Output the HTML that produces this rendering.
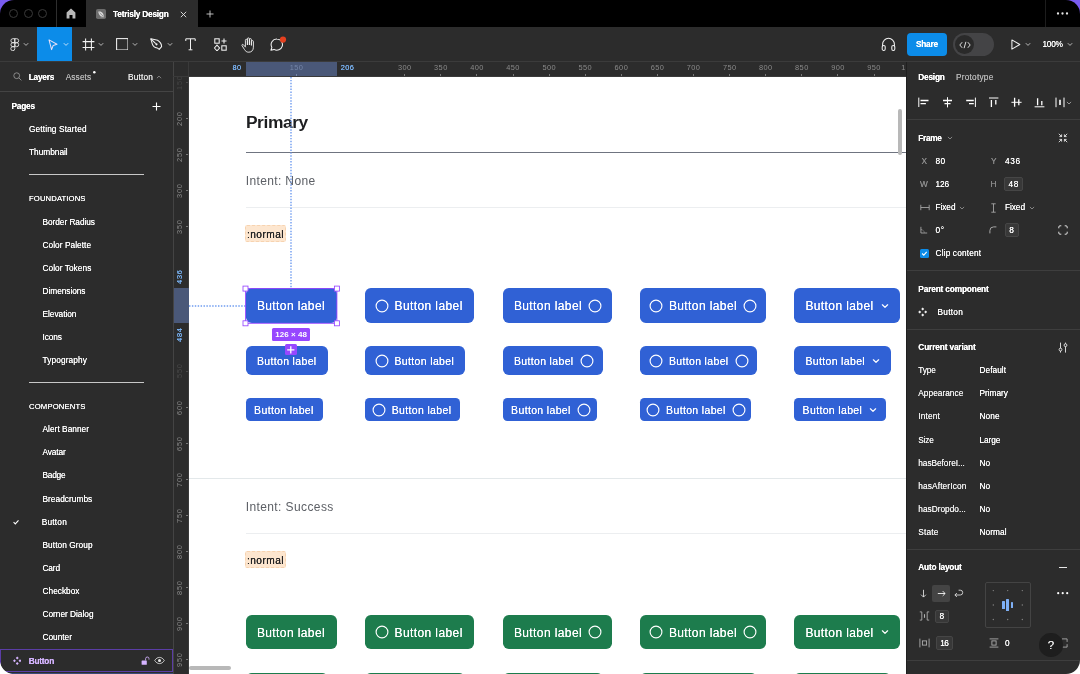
<!DOCTYPE html>
<html lang="en"><head><meta charset="utf-8"><title>Tetrisly Design – Figma</title>
<style>
html,body{margin:0;padding:0;}
body{width:1080px;height:674px;overflow:hidden;background:#fff;font-family:"Liberation Sans",sans-serif;position:relative;}
#app{position:absolute;left:0;top:0;width:1080px;height:674px;overflow:hidden;will-change:transform;}
.a{position:absolute;display:block;box-sizing:border-box;}
.t{position:absolute;display:block;white-space:nowrap;font-family:"Liberation Sans",sans-serif;}
.u{text-shadow:0 0 0.45px currentColor;}
</style></head><body><div id="app">
<div class="a" style="left:0px;top:0px;width:1080px;height:30px;background:#7a5cf0;"></div>
<div class="a" style="left:0px;top:0px;width:1080px;height:27.4px;background:#000;border-radius:14px 14px 0 0;"></div>
<div class="a" style="left:86px;top:0px;width:112px;height:27.4px;background:#2c2c2c;"></div>
<div class="a" style="left:56px;top:0px;width:1px;height:27px;background:#2e2e2e;"></div>
<div class="a" style="left:1045px;top:0px;width:1px;height:27px;background:#1d1d1d;"></div>
<div class="a" style="left:0px;top:27.4px;width:1080px;height:34px;background:#2c2c2c;"></div>
<div class="a" style="left:0px;top:61px;width:1080px;height:1px;background:#3b3b3b;"></div>
<div class="a" style="left:37.3px;top:27.4px;width:34.7px;height:33.8px;background:#0c8ce9;"></div>
<div class="a" style="left:174px;top:62px;width:733px;height:612px;background:#fff;"></div>
<span id="t1" class="t " style="top:109px;font-size:17.4px;line-height:26px;color:#1e1f21;font-weight:700;letter-spacing:-0.397px;left:245.9px;">Primary</span>
<div class="a" style="left:245.5px;top:152px;width:661px;height:0.8px;background:#6f7480;"></div>
<span id="t2" class="t " style="top:172px;font-size:12px;line-height:18px;color:#5d6066;letter-spacing:0.374px;left:245.7px;">Intent: None</span>
<div class="a" style="left:245.5px;top:207px;width:661px;height:1px;background:#eceef0;"></div>
<div class="a" style="left:245.3px;top:225.3px;width:40.7px;height:17.2px;background:#fde6cf;border-radius:2px;border:0.7px dashed #f7d3b0;"></div>
<span id="t3" class="t " style="top:228px;font-size:10.2px;line-height:14px;color:#1e1f21;letter-spacing:0.419px;left:247px;text-shadow:0 0 0.25px #1e1f21;">:normal</span>
<div class="a" style="left:189px;top:478px;width:717px;height:1px;background:#e3e8ea;"></div>
<span id="t4" class="t " style="top:498px;font-size:12px;line-height:18px;color:#5d6066;letter-spacing:0.397px;left:245.7px;">Intent: Success</span>
<div class="a" style="left:245.5px;top:533px;width:661px;height:1px;background:#eceef0;"></div>
<div class="a" style="left:245.3px;top:551.2px;width:40.7px;height:17.2px;background:#fde6cf;border-radius:2px;border:0.7px dashed #f7d3b0;"></div>
<span id="t5" class="t " style="top:554px;font-size:10.2px;line-height:14px;color:#1e1f21;letter-spacing:0.419px;left:247px;text-shadow:0 0 0.25px #1e1f21;">:normal</span>
<div class="a" style="left:245.5px;top:288.4px;width:91.4px;height:34.7px;background:#3061d5;border-radius:5.8px;"></div>
<span id="t6" class="t " style="top:297px;font-size:12px;line-height:18px;color:#fff;letter-spacing:0.401px;left:256.9px;text-shadow:0 0 0.5px #fff;">Button label</span>
<div class="a" style="left:365.1px;top:288.4px;width:109.1px;height:34.7px;background:#3061d5;border-radius:5.8px;"></div>
<svg class="a" style="left:373.6px;top:297.75px;" width="16" height="16" viewBox="0 0 16 16" fill="none"><circle cx="8" cy="8" r="5.9" stroke="#fff" stroke-width="1.15"/></svg>
<span id="t7" class="t " style="top:297px;font-size:12px;line-height:18px;color:#fff;letter-spacing:0.401px;left:394.5px;text-shadow:0 0 0.5px #fff;">Button label</span>
<div class="a" style="left:502.5px;top:288.4px;width:109.0px;height:34.7px;background:#3061d5;border-radius:5.8px;"></div>
<span id="t8" class="t " style="top:297px;font-size:12px;line-height:18px;color:#fff;letter-spacing:0.401px;left:513.9px;text-shadow:0 0 0.5px #fff;">Button label</span>
<svg class="a" style="left:587.3px;top:297.75px;" width="16" height="16" viewBox="0 0 16 16" fill="none"><circle cx="8" cy="8" r="5.9" stroke="#fff" stroke-width="1.15"/></svg>
<div class="a" style="left:639.5px;top:288.4px;width:126.3px;height:34.7px;background:#3061d5;border-radius:5.8px;"></div>
<svg class="a" style="left:648.0px;top:297.75px;" width="16" height="16" viewBox="0 0 16 16" fill="none"><circle cx="8" cy="8" r="5.9" stroke="#fff" stroke-width="1.15"/></svg>
<span id="t9" class="t " style="top:297px;font-size:12px;line-height:18px;color:#fff;letter-spacing:0.401px;left:668.9px;text-shadow:0 0 0.5px #fff;">Button label</span>
<svg class="a" style="left:742.3px;top:297.75px;" width="16" height="16" viewBox="0 0 16 16" fill="none"><circle cx="8" cy="8" r="5.9" stroke="#fff" stroke-width="1.15"/></svg>
<div class="a" style="left:794.0px;top:288.4px;width:106.4px;height:34.7px;background:#3061d5;border-radius:5.8px;"></div>
<span id="t10" class="t " style="top:297px;font-size:12px;line-height:18px;color:#fff;letter-spacing:0.401px;left:805.4px;text-shadow:0 0 0.5px #fff;">Button label</span>
<svg class="a" style="left:880.5px;top:301.95px;" width="8" height="8" viewBox="0 0 8 8" fill="none"><path d="M1.4 2.8 L4 5.4 L6.6 2.8" stroke="#fff" stroke-width="1.25" stroke-linecap="round" stroke-linejoin="round"/></svg>
<div class="a" style="left:245.5px;top:346.4px;width:82.9px;height:28.6px;background:#3061d5;border-radius:5.8px;"></div>
<span id="t11" class="t " style="top:353px;font-size:10.5px;line-height:16px;color:#fff;letter-spacing:0.348px;left:256.9px;text-shadow:0 0 0.5px #fff;">Button label</span>
<div class="a" style="left:365.1px;top:346.4px;width:100.3px;height:28.6px;background:#3061d5;border-radius:5.8px;"></div>
<svg class="a" style="left:373.6px;top:352.7px;" width="16" height="16" viewBox="0 0 16 16" fill="none"><circle cx="8" cy="8" r="5.9" stroke="#fff" stroke-width="1.15"/></svg>
<span id="t12" class="t " style="top:353px;font-size:10.5px;line-height:16px;color:#fff;letter-spacing:0.348px;left:394.5px;text-shadow:0 0 0.5px #fff;">Button label</span>
<div class="a" style="left:502.5px;top:346.4px;width:100.2px;height:28.6px;background:#3061d5;border-radius:5.8px;"></div>
<span id="t13" class="t " style="top:353px;font-size:10.5px;line-height:16px;color:#fff;letter-spacing:0.348px;left:513.9px;text-shadow:0 0 0.5px #fff;">Button label</span>
<svg class="a" style="left:578.8px;top:352.7px;" width="16" height="16" viewBox="0 0 16 16" fill="none"><circle cx="8" cy="8" r="5.9" stroke="#fff" stroke-width="1.15"/></svg>
<div class="a" style="left:639.5px;top:346.4px;width:117.6px;height:28.6px;background:#3061d5;border-radius:5.8px;"></div>
<svg class="a" style="left:648.0px;top:352.7px;" width="16" height="16" viewBox="0 0 16 16" fill="none"><circle cx="8" cy="8" r="5.9" stroke="#fff" stroke-width="1.15"/></svg>
<span id="t14" class="t " style="top:353px;font-size:10.5px;line-height:16px;color:#fff;letter-spacing:0.348px;left:668.9px;text-shadow:0 0 0.5px #fff;">Button label</span>
<svg class="a" style="left:733.8px;top:352.7px;" width="16" height="16" viewBox="0 0 16 16" fill="none"><circle cx="8" cy="8" r="5.9" stroke="#fff" stroke-width="1.15"/></svg>
<div class="a" style="left:794.0px;top:346.4px;width:97.4px;height:28.6px;background:#3061d5;border-radius:5.8px;"></div>
<span id="t15" class="t " style="top:353px;font-size:10.5px;line-height:16px;color:#fff;letter-spacing:0.348px;left:805.4px;text-shadow:0 0 0.5px #fff;">Button label</span>
<svg class="a" style="left:872.0px;top:356.9px;" width="8" height="8" viewBox="0 0 8 8" fill="none"><path d="M1.4 2.8 L4 5.4 L6.6 2.8" stroke="#fff" stroke-width="1.25" stroke-linecap="round" stroke-linejoin="round"/></svg>
<div class="a" style="left:245.5px;top:398.4px;width:77.0px;height:23px;background:#3061d5;border-radius:4.4px;"></div>
<span id="t16" class="t " style="top:402px;font-size:10.5px;line-height:16px;color:#fff;letter-spacing:0.348px;left:254.1px;text-shadow:0 0 0.5px #fff;">Button label</span>
<div class="a" style="left:365.1px;top:398.4px;width:94.6px;height:23px;background:#3061d5;border-radius:4.4px;"></div>
<svg class="a" style="left:370.8px;top:401.9px;" width="16" height="16" viewBox="0 0 16 16" fill="none"><circle cx="8" cy="8" r="5.9" stroke="#fff" stroke-width="1.15"/></svg>
<span id="t17" class="t " style="top:402px;font-size:10.5px;line-height:16px;color:#fff;letter-spacing:0.348px;left:391.7px;text-shadow:0 0 0.5px #fff;">Button label</span>
<div class="a" style="left:502.5px;top:398.4px;width:94.5px;height:23px;background:#3061d5;border-radius:4.4px;"></div>
<span id="t18" class="t " style="top:402px;font-size:10.5px;line-height:16px;color:#fff;letter-spacing:0.348px;left:511.1px;text-shadow:0 0 0.5px #fff;">Button label</span>
<svg class="a" style="left:576.0px;top:401.9px;" width="16" height="16" viewBox="0 0 16 16" fill="none"><circle cx="8" cy="8" r="5.9" stroke="#fff" stroke-width="1.15"/></svg>
<div class="a" style="left:639.5px;top:398.4px;width:111.8px;height:23px;background:#3061d5;border-radius:4.4px;"></div>
<svg class="a" style="left:645.2px;top:401.9px;" width="16" height="16" viewBox="0 0 16 16" fill="none"><circle cx="8" cy="8" r="5.9" stroke="#fff" stroke-width="1.15"/></svg>
<span id="t19" class="t " style="top:402px;font-size:10.5px;line-height:16px;color:#fff;letter-spacing:0.348px;left:666.1px;text-shadow:0 0 0.5px #fff;">Button label</span>
<svg class="a" style="left:731.0px;top:401.9px;" width="16" height="16" viewBox="0 0 16 16" fill="none"><circle cx="8" cy="8" r="5.9" stroke="#fff" stroke-width="1.15"/></svg>
<div class="a" style="left:794.0px;top:398.4px;width:91.6px;height:23px;background:#3061d5;border-radius:4.4px;"></div>
<span id="t20" class="t " style="top:402px;font-size:10.5px;line-height:16px;color:#fff;letter-spacing:0.348px;left:802.6px;text-shadow:0 0 0.5px #fff;">Button label</span>
<svg class="a" style="left:869.2px;top:406.1px;" width="8" height="8" viewBox="0 0 8 8" fill="none"><path d="M1.4 2.8 L4 5.4 L6.6 2.8" stroke="#fff" stroke-width="1.25" stroke-linecap="round" stroke-linejoin="round"/></svg>
<div class="a" style="left:245.5px;top:614.8px;width:91.4px;height:34.7px;background:#1d7c4d;border-radius:5.8px;"></div>
<span id="t21" class="t " style="top:624px;font-size:12px;line-height:18px;color:#fff;letter-spacing:0.401px;left:256.9px;text-shadow:0 0 0.5px #fff;">Button label</span>
<div class="a" style="left:365.1px;top:614.8px;width:109.1px;height:34.7px;background:#1d7c4d;border-radius:5.8px;"></div>
<svg class="a" style="left:373.6px;top:624.15px;" width="16" height="16" viewBox="0 0 16 16" fill="none"><circle cx="8" cy="8" r="5.9" stroke="#fff" stroke-width="1.15"/></svg>
<span id="t22" class="t " style="top:624px;font-size:12px;line-height:18px;color:#fff;letter-spacing:0.401px;left:394.5px;text-shadow:0 0 0.5px #fff;">Button label</span>
<div class="a" style="left:502.5px;top:614.8px;width:109.0px;height:34.7px;background:#1d7c4d;border-radius:5.8px;"></div>
<span id="t23" class="t " style="top:624px;font-size:12px;line-height:18px;color:#fff;letter-spacing:0.401px;left:513.9px;text-shadow:0 0 0.5px #fff;">Button label</span>
<svg class="a" style="left:587.3px;top:624.15px;" width="16" height="16" viewBox="0 0 16 16" fill="none"><circle cx="8" cy="8" r="5.9" stroke="#fff" stroke-width="1.15"/></svg>
<div class="a" style="left:639.5px;top:614.8px;width:126.3px;height:34.7px;background:#1d7c4d;border-radius:5.8px;"></div>
<svg class="a" style="left:648.0px;top:624.15px;" width="16" height="16" viewBox="0 0 16 16" fill="none"><circle cx="8" cy="8" r="5.9" stroke="#fff" stroke-width="1.15"/></svg>
<span id="t24" class="t " style="top:624px;font-size:12px;line-height:18px;color:#fff;letter-spacing:0.401px;left:668.9px;text-shadow:0 0 0.5px #fff;">Button label</span>
<svg class="a" style="left:742.3px;top:624.15px;" width="16" height="16" viewBox="0 0 16 16" fill="none"><circle cx="8" cy="8" r="5.9" stroke="#fff" stroke-width="1.15"/></svg>
<div class="a" style="left:794.0px;top:614.8px;width:106.4px;height:34.7px;background:#1d7c4d;border-radius:5.8px;"></div>
<span id="t25" class="t " style="top:624px;font-size:12px;line-height:18px;color:#fff;letter-spacing:0.401px;left:805.4px;text-shadow:0 0 0.5px #fff;">Button label</span>
<svg class="a" style="left:880.5px;top:628.35px;" width="8" height="8" viewBox="0 0 8 8" fill="none"><path d="M1.4 2.8 L4 5.4 L6.6 2.8" stroke="#fff" stroke-width="1.25" stroke-linecap="round" stroke-linejoin="round"/></svg>
<div class="a" style="left:245.5px;top:672.8px;width:82.9px;height:28.6px;background:#1d7c4d;border-radius:5.8px;"></div>
<span id="t26" class="t " style="top:679px;font-size:10.5px;line-height:16px;color:#fff;letter-spacing:0.348px;left:256.9px;text-shadow:0 0 0.5px #fff;">Button label</span>
<div class="a" style="left:365.1px;top:672.8px;width:100.3px;height:28.6px;background:#1d7c4d;border-radius:5.8px;"></div>
<svg class="a" style="left:373.6px;top:679.1px;" width="16" height="16" viewBox="0 0 16 16" fill="none"><circle cx="8" cy="8" r="5.9" stroke="#fff" stroke-width="1.15"/></svg>
<span id="t27" class="t " style="top:679px;font-size:10.5px;line-height:16px;color:#fff;letter-spacing:0.348px;left:394.5px;text-shadow:0 0 0.5px #fff;">Button label</span>
<div class="a" style="left:502.5px;top:672.8px;width:100.2px;height:28.6px;background:#1d7c4d;border-radius:5.8px;"></div>
<span id="t28" class="t " style="top:679px;font-size:10.5px;line-height:16px;color:#fff;letter-spacing:0.348px;left:513.9px;text-shadow:0 0 0.5px #fff;">Button label</span>
<svg class="a" style="left:578.8px;top:679.1px;" width="16" height="16" viewBox="0 0 16 16" fill="none"><circle cx="8" cy="8" r="5.9" stroke="#fff" stroke-width="1.15"/></svg>
<div class="a" style="left:639.5px;top:672.8px;width:117.6px;height:28.6px;background:#1d7c4d;border-radius:5.8px;"></div>
<svg class="a" style="left:648.0px;top:679.1px;" width="16" height="16" viewBox="0 0 16 16" fill="none"><circle cx="8" cy="8" r="5.9" stroke="#fff" stroke-width="1.15"/></svg>
<span id="t29" class="t " style="top:679px;font-size:10.5px;line-height:16px;color:#fff;letter-spacing:0.348px;left:668.9px;text-shadow:0 0 0.5px #fff;">Button label</span>
<svg class="a" style="left:733.8px;top:679.1px;" width="16" height="16" viewBox="0 0 16 16" fill="none"><circle cx="8" cy="8" r="5.9" stroke="#fff" stroke-width="1.15"/></svg>
<div class="a" style="left:794.0px;top:672.8px;width:97.4px;height:28.6px;background:#1d7c4d;border-radius:5.8px;"></div>
<span id="t30" class="t " style="top:679px;font-size:10.5px;line-height:16px;color:#fff;letter-spacing:0.348px;left:805.4px;text-shadow:0 0 0.5px #fff;">Button label</span>
<svg class="a" style="left:872.0px;top:683.3px;" width="8" height="8" viewBox="0 0 8 8" fill="none"><path d="M1.4 2.8 L4 5.4 L6.6 2.8" stroke="#fff" stroke-width="1.25" stroke-linecap="round" stroke-linejoin="round"/></svg>
<svg class="a" style="left:288px;top:76px;" width="6" height="213" viewBox="0 0 6 213" fill="none"><path d="M3 1V213" stroke="#6f9cf0" stroke-width="1.4" stroke-dasharray="1.45 1.45"/></svg>
<svg class="a" style="left:189px;top:303px;" width="57" height="6" viewBox="0 0 57 6" fill="none"><path d="M0 3H56.5" stroke="#6f9cf0" stroke-width="1.4" stroke-dasharray="1.45 1.45"/></svg>
<svg class="a" style="left:240px;top:283px;" width="103" height="46" viewBox="0 0 103 46" fill="none"><rect x="5.5" y="5.6" width="91.4" height="34.7" stroke="#9747ff" stroke-width="0.9"/><rect x="3.0" y="3.0999999999999996" width="5" height="5" fill="#fff" stroke="#9747ff" stroke-width="0.85"/><rect x="3.0" y="37.8" width="5" height="5" fill="#fff" stroke="#9747ff" stroke-width="0.85"/><rect x="94.4" y="3.0999999999999996" width="5" height="5" fill="#fff" stroke="#9747ff" stroke-width="0.85"/><rect x="94.4" y="37.8" width="5" height="5" fill="#fff" stroke="#9747ff" stroke-width="0.85"/></svg>
<div class="a" style="left:272px;top:328.4px;width:38.2px;height:12.6px;background:#9747ff;border-radius:1.5px;"></div>
<span id="t31" class="t " style="top:329px;font-size:8px;line-height:12px;color:#fff;font-weight:700;letter-spacing:0.018px;left:191.10000000000002px;width:200px;text-align:center;text-indent:0.018px;">126 × 48</span>
<div class="a" style="left:285.3px;top:343.6px;width:11.6px;height:11.6px;background:#9747ff;border-radius:1.5px;"></div>
<svg class="a" style="left:285.3px;top:343.6px;" width="11.6" height="11.6" viewBox="0 0 11.6 11.6" fill="none"><path d="M5.8 2.2v7.2M2.2 5.8h7.2" stroke="#fff" stroke-width="1.3"/></svg>
<div class="a" style="left:898.3px;top:109px;width:4.2px;height:45.5px;background:#b8b8b8;border-radius:2.1px;"></div>
<div class="a" style="left:189px;top:666px;width:42px;height:4.2px;background:#b8b8b8;border-radius:2.1px;"></div>
<div class="a" style="left:174px;top:62px;width:733px;height:14.5px;background:#2c2c2c;"></div>
<div class="a" style="left:174px;top:62px;width:14.8px;height:612px;background:#2c2c2c;"></div>
<div class="a" style="left:174px;top:76px;width:733px;height:0.6px;background:#3a3a3a;"></div>
<div class="a" style="left:188.4px;top:76px;width:0.6px;height:598px;background:#3a3a3a;"></div>
<div class="a" style="left:173.4px;top:62px;width:0.8px;height:612px;background:#444;"></div>
<div class="a" style="left:245.6px;top:62px;width:91px;height:14.4px;background:#4a5878;"></div>
<div class="a" style="left:174px;top:288.4px;width:14.6px;height:34.7px;background:#4a5878;"></div>
<span id="t32" class="t " style="top:63px;font-size:7.4px;line-height:10px;color:#8a8a8a;letter-spacing:0.428px;left:304.6px;width:200px;text-align:center;text-indent:0.428px;">300</span>
<div class="a" style="left:404.2px;top:73.6px;width:0.8px;height:2.6px;background:#777;"></div>
<span id="t33" class="t " style="top:63px;font-size:7.4px;line-height:10px;color:#8a8a8a;letter-spacing:0.428px;left:340.7px;width:200px;text-align:center;text-indent:0.428px;">350</span>
<div class="a" style="left:440.3px;top:73.6px;width:0.8px;height:2.6px;background:#777;"></div>
<span id="t34" class="t " style="top:63px;font-size:7.4px;line-height:10px;color:#8a8a8a;letter-spacing:0.428px;left:376.8px;width:200px;text-align:center;text-indent:0.428px;">400</span>
<div class="a" style="left:476.4px;top:73.6px;width:0.8px;height:2.6px;background:#777;"></div>
<span id="t35" class="t " style="top:63px;font-size:7.4px;line-height:10px;color:#8a8a8a;letter-spacing:0.428px;left:412.9px;width:200px;text-align:center;text-indent:0.428px;">450</span>
<div class="a" style="left:512.5px;top:73.6px;width:0.8px;height:2.6px;background:#777;"></div>
<span id="t36" class="t " style="top:63px;font-size:7.4px;line-height:10px;color:#8a8a8a;letter-spacing:0.428px;left:449.0px;width:200px;text-align:center;text-indent:0.428px;">500</span>
<div class="a" style="left:548.6px;top:73.6px;width:0.8px;height:2.6px;background:#777;"></div>
<span id="t37" class="t " style="top:63px;font-size:7.4px;line-height:10px;color:#8a8a8a;letter-spacing:0.428px;left:485.1px;width:200px;text-align:center;text-indent:0.428px;">550</span>
<div class="a" style="left:584.7px;top:73.6px;width:0.8px;height:2.6px;background:#777;"></div>
<span id="t38" class="t " style="top:63px;font-size:7.4px;line-height:10px;color:#8a8a8a;letter-spacing:0.428px;left:521.2px;width:200px;text-align:center;text-indent:0.428px;">600</span>
<div class="a" style="left:620.8px;top:73.6px;width:0.8px;height:2.6px;background:#777;"></div>
<span id="t39" class="t " style="top:63px;font-size:7.4px;line-height:10px;color:#8a8a8a;letter-spacing:0.428px;left:557.3px;width:200px;text-align:center;text-indent:0.428px;">650</span>
<div class="a" style="left:656.9px;top:73.6px;width:0.8px;height:2.6px;background:#777;"></div>
<span id="t40" class="t " style="top:63px;font-size:7.4px;line-height:10px;color:#8a8a8a;letter-spacing:0.428px;left:593.4px;width:200px;text-align:center;text-indent:0.428px;">700</span>
<div class="a" style="left:693.0px;top:73.6px;width:0.8px;height:2.6px;background:#777;"></div>
<span id="t41" class="t " style="top:63px;font-size:7.4px;line-height:10px;color:#8a8a8a;letter-spacing:0.428px;left:629.5px;width:200px;text-align:center;text-indent:0.428px;">750</span>
<div class="a" style="left:729.1px;top:73.6px;width:0.8px;height:2.6px;background:#777;"></div>
<span id="t42" class="t " style="top:63px;font-size:7.4px;line-height:10px;color:#8a8a8a;letter-spacing:0.428px;left:665.6px;width:200px;text-align:center;text-indent:0.428px;">800</span>
<div class="a" style="left:765.2px;top:73.6px;width:0.8px;height:2.6px;background:#777;"></div>
<span id="t43" class="t " style="top:63px;font-size:7.4px;line-height:10px;color:#8a8a8a;letter-spacing:0.428px;left:701.7px;width:200px;text-align:center;text-indent:0.428px;">850</span>
<div class="a" style="left:801.3px;top:73.6px;width:0.8px;height:2.6px;background:#777;"></div>
<span id="t44" class="t " style="top:63px;font-size:7.4px;line-height:10px;color:#8a8a8a;letter-spacing:0.428px;left:737.8px;width:200px;text-align:center;text-indent:0.428px;">900</span>
<div class="a" style="left:837.4px;top:73.6px;width:0.8px;height:2.6px;background:#777;"></div>
<span id="t45" class="t " style="top:63px;font-size:7.4px;line-height:10px;color:#8a8a8a;letter-spacing:0.428px;left:773.9px;width:200px;text-align:center;text-indent:0.428px;">950</span>
<div class="a" style="left:873.5px;top:73.6px;width:0.8px;height:2.6px;background:#777;"></div>
<span id="t46" class="t " style="top:63px;font-size:7.4px;line-height:10px;color:#8a8a8a;letter-spacing:0.382px;left:810.0px;width:200px;text-align:center;text-indent:0.382px;">1000</span>
<div class="a" style="left:909.6px;top:73.6px;width:0.8px;height:2.6px;background:#777;"></div>
<span id="t47" class="t " style="top:63px;font-size:7.4px;line-height:10px;color:#7586a8;letter-spacing:0.428px;left:196.3px;width:200px;text-align:center;text-indent:0.428px;">150</span>
<div class="a" style="left:296px;top:73.8px;width:0.8px;height:2.4px;background:#7586a8;"></div>
<span id="t48" class="t " style="top:63px;font-size:7.4px;line-height:10px;color:#7ab4f5;letter-spacing:0.366px;left:232.6px;text-shadow:0 0 0.4px #7ab4f5;">80</span>
<span id="t49" class="t " style="top:63px;font-size:7.4px;line-height:10px;color:#7ab4f5;letter-spacing:0.428px;left:340.8px;text-shadow:0 0 0.4px #7ab4f5;">206</span>
<span id="t50" class="t " style="top:114px;font-size:7.4px;line-height:10px;color:#8a8a8a;left:80.19999999999999px;width:200px;text-align:center;transform:rotate(-90deg);transform-origin:center center;letter-spacing:0.8px;text-indent:0.8px;">200</span>
<div class="a" style="left:185.8px;top:117.9px;width:2.6px;height:0.8px;background:#777;"></div>
<span id="t51" class="t " style="top:150px;font-size:7.4px;line-height:10px;color:#8a8a8a;left:80.19999999999999px;width:200px;text-align:center;transform:rotate(-90deg);transform-origin:center center;letter-spacing:0.8px;text-indent:0.8px;">250</span>
<div class="a" style="left:185.8px;top:154.0px;width:2.6px;height:0.8px;background:#777;"></div>
<span id="t52" class="t " style="top:186px;font-size:7.4px;line-height:10px;color:#8a8a8a;left:80.19999999999999px;width:200px;text-align:center;transform:rotate(-90deg);transform-origin:center center;letter-spacing:0.8px;text-indent:0.8px;">300</span>
<div class="a" style="left:185.8px;top:190.1px;width:2.6px;height:0.8px;background:#777;"></div>
<span id="t53" class="t " style="top:222px;font-size:7.4px;line-height:10px;color:#8a8a8a;left:80.19999999999999px;width:200px;text-align:center;transform:rotate(-90deg);transform-origin:center center;letter-spacing:0.8px;text-indent:0.8px;">350</span>
<div class="a" style="left:185.8px;top:226.2px;width:2.6px;height:0.8px;background:#777;"></div>
<span id="t54" class="t " style="top:366px;font-size:7.4px;line-height:10px;color:#4a4a4a;left:80.19999999999999px;width:200px;text-align:center;transform:rotate(-90deg);transform-origin:center center;letter-spacing:0.8px;text-indent:0.8px;">550</span>
<div class="a" style="left:185.8px;top:370.6px;width:2.6px;height:0.8px;background:#4a4a4a;"></div>
<span id="t55" class="t " style="top:403px;font-size:7.4px;line-height:10px;color:#8a8a8a;left:80.19999999999999px;width:200px;text-align:center;transform:rotate(-90deg);transform-origin:center center;letter-spacing:0.8px;text-indent:0.8px;">600</span>
<div class="a" style="left:185.8px;top:406.7px;width:2.6px;height:0.8px;background:#777;"></div>
<span id="t56" class="t " style="top:439px;font-size:7.4px;line-height:10px;color:#8a8a8a;left:80.19999999999999px;width:200px;text-align:center;transform:rotate(-90deg);transform-origin:center center;letter-spacing:0.8px;text-indent:0.8px;">650</span>
<div class="a" style="left:185.8px;top:442.8px;width:2.6px;height:0.8px;background:#777;"></div>
<span id="t57" class="t " style="top:475px;font-size:7.4px;line-height:10px;color:#8a8a8a;left:80.19999999999999px;width:200px;text-align:center;transform:rotate(-90deg);transform-origin:center center;letter-spacing:0.8px;text-indent:0.8px;">700</span>
<div class="a" style="left:185.8px;top:478.9px;width:2.6px;height:0.8px;background:#777;"></div>
<span id="t58" class="t " style="top:511px;font-size:7.4px;line-height:10px;color:#8a8a8a;left:80.19999999999999px;width:200px;text-align:center;transform:rotate(-90deg);transform-origin:center center;letter-spacing:0.8px;text-indent:0.8px;">750</span>
<div class="a" style="left:185.8px;top:515.0px;width:2.6px;height:0.8px;background:#777;"></div>
<span id="t59" class="t " style="top:547px;font-size:7.4px;line-height:10px;color:#8a8a8a;left:80.19999999999999px;width:200px;text-align:center;transform:rotate(-90deg);transform-origin:center center;letter-spacing:0.8px;text-indent:0.8px;">800</span>
<div class="a" style="left:185.8px;top:551.1px;width:2.6px;height:0.8px;background:#777;"></div>
<span id="t60" class="t " style="top:583px;font-size:7.4px;line-height:10px;color:#8a8a8a;left:80.19999999999999px;width:200px;text-align:center;transform:rotate(-90deg);transform-origin:center center;letter-spacing:0.8px;text-indent:0.8px;">850</span>
<div class="a" style="left:185.8px;top:587.2px;width:2.6px;height:0.8px;background:#777;"></div>
<span id="t61" class="t " style="top:619px;font-size:7.4px;line-height:10px;color:#8a8a8a;left:80.19999999999999px;width:200px;text-align:center;transform:rotate(-90deg);transform-origin:center center;letter-spacing:0.8px;text-indent:0.8px;">900</span>
<div class="a" style="left:185.8px;top:623.3px;width:2.6px;height:0.8px;background:#777;"></div>
<span id="t62" class="t " style="top:655px;font-size:7.4px;line-height:10px;color:#8a8a8a;left:80.19999999999999px;width:200px;text-align:center;transform:rotate(-90deg);transform-origin:center center;letter-spacing:0.8px;text-indent:0.8px;">950</span>
<div class="a" style="left:185.8px;top:659.4px;width:2.6px;height:0.8px;background:#777;"></div>
<span id="t63" class="t " style="top:78px;font-size:7.4px;line-height:10px;color:#444;left:80.19999999999999px;width:200px;text-align:center;transform:rotate(-90deg);transform-origin:center center;letter-spacing:0.8px;text-indent:0.8px;">150</span>
<span id="t64" class="t " style="top:272px;font-size:7.4px;line-height:10px;color:#7ab4f5;left:80.19999999999999px;width:200px;text-align:center;transform:rotate(-90deg);transform-origin:center center;text-shadow:0 0 0.4px #7ab4f5;letter-spacing:0.8px;text-indent:0.8px;">436</span>
<span id="t65" class="t " style="top:330px;font-size:7.4px;line-height:10px;color:#7ab4f5;left:80.19999999999999px;width:200px;text-align:center;transform:rotate(-90deg);transform-origin:center center;text-shadow:0 0 0.4px #7ab4f5;letter-spacing:0.8px;text-indent:0.8px;">484</span>
<div class="a" style="left:174px;top:62px;width:14.6px;height:14.4px;background:#2c2c2c;"></div>
<div class="a" style="left:173.4px;top:76px;width:15px;height:0.6px;background:#3a3a3a;"></div>
<div class="a" style="left:188px;top:62px;width:1px;height:14px;background:#3a3a3a;"></div>
<div class="a" style="left:186px;top:82px;width:2.4px;height:0.8px;background:#4a4a4a;"></div>
<div class="a" style="left:0px;top:62px;width:173.4px;height:612px;background:#2c2c2c;"></div>
<div class="a" style="left:0px;top:90.6px;width:174px;height:0.8px;background:#444;"></div>
<svg class="a" style="left:12.5px;top:72px;" width="9" height="9" viewBox="0 0 9 9" fill="none"><circle cx="3.7" cy="3.7" r="2.9" stroke="#9a9a9a" stroke-width="0.85"/><path d="M5.9 5.9L8.4 8.4" stroke="#9a9a9a" stroke-width="0.85"/></svg>
<span id="t66" class="t u" style="top:71px;font-size:8.3px;line-height:12px;color:#fff;font-weight:700;letter-spacing:-0.233px;left:28.7px;">Layers</span>
<span id="t67" class="t u" style="top:71px;font-size:8.3px;line-height:12px;color:#b3b3b3;letter-spacing:0.119px;left:65.7px;">Assets</span>
<svg class="a" style="left:92px;top:69px;" width="6" height="6" viewBox="0 0 6 6"><circle cx="2.3" cy="3.2" r="1.25" fill="#fff"/></svg>
<span id="t68" class="t u" style="top:71px;font-size:8.3px;line-height:12px;color:#e6e6e6;letter-spacing:0.2px;left:128px;">Button</span>
<svg class="a" style="left:156px;top:73.5px;" width="6" height="6" viewBox="0 0 6 6" fill="none"><path d="M0.9 4.2L3 2.1L5.1 4.2" stroke="#9a9a9a" stroke-width="0.8"/></svg>
<span id="t69" class="t u" style="top:100px;font-size:8.3px;line-height:12px;color:#fff;font-weight:700;letter-spacing:-0.238px;left:11.5px;">Pages</span>
<svg class="a" style="left:151.5px;top:101.7px;" width="9" height="9" viewBox="0 0 9 9" fill="none"><path d="M4.5 0.5v8M0.5 4.5h8" stroke="#fff" stroke-width="1.1"/></svg>
<span id="t70" class="t u" style="top:123px;font-size:8.3px;line-height:12px;color:#fff;letter-spacing:0.121px;left:29px;">Getting Started</span>
<span id="t71" class="t u" style="top:146px;font-size:8.3px;line-height:12px;color:#fff;letter-spacing:-0.006px;left:29px;">Thumbnail</span>
<div class="a" style="left:29px;top:174.2px;width:115.2px;height:0.9px;background:#c8c8c8;"></div>
<span id="t72" class="t u" style="top:193px;font-size:7.7px;line-height:12px;color:#fff;letter-spacing:0.111px;left:29px;">FOUNDATIONS</span>
<span id="t73" class="t u" style="top:216px;font-size:8.3px;line-height:12px;color:#fff;letter-spacing:-0.046px;left:42.5px;">Border Radius</span>
<span id="t74" class="t u" style="top:239px;font-size:8.3px;line-height:12px;color:#fff;letter-spacing:0.044px;left:42.5px;">Color Palette</span>
<span id="t75" class="t u" style="top:262px;font-size:8.3px;line-height:12px;color:#fff;letter-spacing:0.047px;left:42.5px;">Color Tokens</span>
<span id="t76" class="t u" style="top:285px;font-size:8.3px;line-height:12px;color:#fff;letter-spacing:-0.04px;left:42.5px;">Dimensions</span>
<span id="t77" class="t u" style="top:308px;font-size:8.3px;line-height:12px;color:#fff;letter-spacing:-0.018px;left:42.5px;">Elevation</span>
<span id="t78" class="t u" style="top:331px;font-size:8.3px;line-height:12px;color:#fff;letter-spacing:-0.086px;left:42.5px;">Icons</span>
<span id="t79" class="t u" style="top:354px;font-size:8.3px;line-height:12px;color:#fff;letter-spacing:0.105px;left:42.5px;">Typography</span>
<div class="a" style="left:29px;top:382.0px;width:115.2px;height:0.9px;background:#c8c8c8;"></div>
<span id="t80" class="t u" style="top:401px;font-size:7.7px;line-height:12px;color:#fff;letter-spacing:0.155px;left:29px;">COMPONENTS</span>
<span id="t81" class="t u" style="top:423px;font-size:8.3px;line-height:12px;color:#fff;letter-spacing:0.034px;left:42.5px;">Alert Banner</span>
<span id="t82" class="t u" style="top:446px;font-size:8.3px;line-height:12px;color:#fff;letter-spacing:-0.109px;left:42.5px;">Avatar</span>
<span id="t83" class="t u" style="top:469px;font-size:8.3px;line-height:12px;color:#fff;letter-spacing:-0.25px;left:42.5px;">Badge</span>
<span id="t84" class="t u" style="top:493px;font-size:8.3px;line-height:12px;color:#fff;letter-spacing:0.036px;left:42.5px;">Breadcrumbs</span>
<span id="t85" class="t u" style="top:516px;font-size:8.3px;line-height:12px;color:#fff;letter-spacing:0.2px;left:41.8px;">Button</span>
<svg class="a" style="left:11.5px;top:517.7px;" width="8" height="8" viewBox="0 0 8 8" fill="none"><path d="M1.6 4.2L3.3 5.9L6.5 2.3" stroke="#fff" stroke-width="1.1"/></svg>
<span id="t86" class="t u" style="top:539px;font-size:8.3px;line-height:12px;color:#fff;letter-spacing:0.058px;left:42.5px;">Button Group</span>
<span id="t87" class="t u" style="top:562px;font-size:8.3px;line-height:12px;color:#fff;letter-spacing:-0.161px;left:42.5px;">Card</span>
<span id="t88" class="t u" style="top:585px;font-size:8.3px;line-height:12px;color:#fff;letter-spacing:0.013px;left:42.5px;">Checkbox</span>
<span id="t89" class="t u" style="top:608px;font-size:8.3px;line-height:12px;color:#fff;letter-spacing:-0.016px;left:42.5px;">Corner Dialog</span>
<span id="t90" class="t u" style="top:631px;font-size:8.3px;line-height:12px;color:#fff;letter-spacing:-0.005px;left:42.5px;">Counter</span>
<div class="a" style="left:0px;top:648.6px;width:173px;height:23.8px;background:#2c2c2c;border:1.1px solid #5b3da6;"></div>
<svg class="a" style="left:13.2px;top:655.8px;transform:scale(0.9);transform-origin:0 0;" width="9.4" height="10.6" viewBox="0 0 9.4 10.6" fill="none"><g fill="#d5b4ff"><path d="M4.7 0.6L6.3 2.2L4.7 3.8L3.1 2.2Z"/><path d="M4.7 6.8L6.3 8.4L4.7 10L3.1 8.4Z"/><path d="M1.6 3.7L3.2 5.3L1.6 6.9L0 5.3Z"/><path d="M7.8 3.7L9.4 5.3L7.8 6.9L6.2 5.3Z"/></g></svg>
<span id="t91" class="t u" style="top:655px;font-size:8.3px;line-height:12px;color:#d5b4ff;font-weight:700;letter-spacing:-0.227px;left:28.7px;">Button</span>
<svg class="a" style="left:140.5px;top:655.5px;" width="9" height="10" viewBox="0 0 9 10" fill="none"><rect x="0.6" y="4.4" width="5.2" height="4.4" rx="0.5" fill="#d5b4ff"/><path d="M4.6 4.4V2.7a1.7 1.7 0 0 1 3.4 0V3.6" stroke="#d5b4ff" stroke-width="0.85"/></svg>
<svg class="a" style="left:153.5px;top:656px;" width="11" height="9" viewBox="0 0 11 9" fill="none"><path d="M0.7 4.5C2 2.4 3.7 1.4 5.5 1.4S9 2.4 10.3 4.5C9 6.6 7.3 7.6 5.5 7.6S2 6.6 0.7 4.5Z" stroke="#e8e8e8" stroke-width="0.8"/><circle cx="5.5" cy="4.5" r="1.5" fill="#e8e8e8"/></svg>
<div class="a" style="left:0px;top:672.6px;width:173.4px;height:1.4px;background:#3a4a78;border-radius:0 0 0 0;"></div>
<div class="a" style="left:0px;top:660px;width:14px;height:14px;background:radial-gradient(circle at 100% 0,rgba(255,255,255,0) 13.6px,#fff 14.4px);"></div>
<div class="a" style="left:906.2px;top:62px;width:173.8px;height:612px;background:#2c2c2c;border-radius:0 0 14px 0;"></div>
<div class="a" style="left:906.2px;top:62px;width:0.9px;height:612px;background:#1f1f1f;"></div>
<span id="t92" class="t u" style="top:71px;font-size:8.3px;line-height:12px;color:#fff;font-weight:700;letter-spacing:-0.234px;left:918.3px;">Design</span>
<span id="t93" class="t u" style="top:71px;font-size:8.3px;line-height:12px;color:#b3b3b3;letter-spacing:0.223px;left:956px;">Prototype</span>
<svg class="a" style="left:918px;top:97px;" width="11" height="11" viewBox="0 0 11 11" fill="none"><path d="M0.8 0.6v9.4" stroke="#fff" stroke-width="1"/><path d="M2.5 3.5h8M2.5 6.7h5.4" stroke="#fff" stroke-width="1.3"/></svg>
<svg class="a" style="left:942px;top:97px;" width="11" height="11" viewBox="0 0 11 11" fill="none"><path d="M5.5 0.2v10.2" stroke="#fff" stroke-width="1"/><path d="M1 3.5h9M2.5 6.7h6" stroke="#fff" stroke-width="1.3"/></svg>
<svg class="a" style="left:966px;top:97px;" width="11" height="11" viewBox="0 0 11 11" fill="none"><path d="M9.4 0.6v9.4" stroke="#fff" stroke-width="1"/><path d="M0.2 3.5h7.6M3 6.7h4.8" stroke="#fff" stroke-width="1.3"/></svg>
<svg class="a" style="left:988px;top:97px;" width="11" height="11" viewBox="0 0 11 11" fill="none"><path d="M1 1h9.4" stroke="#fff" stroke-width="1"/><path d="M3.4 3v7M7.8 3v4.6" stroke="#fff" stroke-width="1.3"/></svg>
<svg class="a" style="left:1011px;top:97px;" width="11" height="11" viewBox="0 0 11 11" fill="none"><path d="M0.4 5.3h10.2" stroke="#fff" stroke-width="1"/><path d="M3.6 0.8v9M7.8 2.3v6" stroke="#fff" stroke-width="1.3"/></svg>
<svg class="a" style="left:1034px;top:97px;" width="11" height="11" viewBox="0 0 11 11" fill="none"><path d="M0.6 9.8h9.8" stroke="#fff" stroke-width="1"/><path d="M3.6 1.2v7M7.8 4v4.2" stroke="#fff" stroke-width="1.3"/></svg>
<svg class="a" style="left:1054.5px;top:97px;" width="10" height="11" viewBox="0 0 10 11" fill="none"><path d="M1 0.6v9.6M9 0.6v9.6" stroke="#fff" stroke-width="1"/><path d="M5 2.8v5.2" stroke="#fff" stroke-width="1.6"/></svg>
<svg class="a" style="left:1065.5px;top:99.5px;" width="6" height="6" viewBox="0 0 6 6" fill="none"><path d="M0.9 1.9L3 4L5.1 1.9" stroke="#b3b3b3" stroke-width="0.8"/></svg>
<div class="a" style="left:907px;top:119px;width:173px;height:0.8px;background:#3e3e3e;"></div>
<span id="t94" class="t u" style="top:132px;font-size:8.3px;line-height:12px;color:#fff;font-weight:700;letter-spacing:-0.352px;left:918.3px;">Frame</span>
<svg class="a" style="left:946.5px;top:135.4px;" width="6" height="6" viewBox="0 0 6 6" fill="none"><path d="M0.9 1.9L3 4L5.1 1.9" stroke="#9a9a9a" stroke-width="0.8"/></svg>
<svg class="a" style="left:1057.5px;top:132.8px;" width="10" height="10" viewBox="0 0 10 10" fill="none"><g stroke="#f4f4f4" stroke-width="0.85"><path d="M0.8 0.8L3.6 3.6M3.6 1.4V3.6H1.4"/><path d="M9.2 0.8L6.4 3.6M6.4 1.4V3.6H8.6"/><path d="M0.8 9.2L3.6 6.4M3.6 8.6V6.4H1.4"/><path d="M9.2 9.2L6.4 6.4M6.4 8.6V6.4H8.6"/></g></svg>
<span id="t95" class="t u" style="top:155px;font-size:8.3px;line-height:12px;color:#8c8c8c;left:921.5px;">X</span>
<span id="t96" class="t u" style="top:155px;font-size:8.3px;line-height:12px;color:#fff;letter-spacing:0.266px;left:935.5px;">80</span>
<span id="t97" class="t u" style="top:155px;font-size:8.3px;line-height:12px;color:#8c8c8c;left:991px;">Y</span>
<span id="t98" class="t u" style="top:155px;font-size:8.3px;line-height:12px;color:#fff;letter-spacing:0.578px;left:1005px;">436</span>
<span id="t99" class="t u" style="top:178px;font-size:8.3px;line-height:12px;color:#8c8c8c;left:920px;">W</span>
<span id="t100" class="t u" style="top:178px;font-size:8.3px;line-height:12px;color:#fff;letter-spacing:-0.172px;left:935.5px;">126</span>
<span id="t101" class="t u" style="top:178px;font-size:8.3px;line-height:12px;color:#8c8c8c;left:990.5px;">H</span>
<div class="a" style="left:1004px;top:177.0px;width:19px;height:13.8px;background:#383838;border:0.8px solid #464646;border-radius:2px;"></div>
<span id="t102" class="t u" style="top:178px;font-size:8.3px;line-height:12px;color:#fff;letter-spacing:0.766px;left:1008.4px;">48</span>
<svg class="a" style="left:919.5px;top:202.7px;" width="10" height="9" viewBox="0 0 10 9" fill="none"><g stroke="#b3b3b3" stroke-width="0.8"><path d="M0.8 1.8v5.4M9.2 1.8v5.4M0.8 4.5h8.4"/></g></svg>
<span id="t103" class="t u" style="top:201px;font-size:8.3px;line-height:12px;color:#fff;letter-spacing:-0.074px;left:935.5px;">Fixed</span>
<svg class="a" style="left:959.3px;top:204.5px;" width="6" height="6" viewBox="0 0 6 6" fill="none"><path d="M0.9 1.9L3 4L5.1 1.9" stroke="#9a9a9a" stroke-width="0.8"/></svg>
<svg class="a" style="left:989px;top:202.5px;" width="9" height="10" viewBox="0 0 9 10" fill="none"><g stroke="#b3b3b3" stroke-width="0.8"><path d="M2.3 0.8h4.4M2.3 9.2h4.4M4.5 0.8v8.4"/></g></svg>
<span id="t104" class="t u" style="top:201px;font-size:8.3px;line-height:12px;color:#fff;letter-spacing:-0.074px;left:1005px;">Fixed</span>
<svg class="a" style="left:1028.5px;top:204.5px;" width="6" height="6" viewBox="0 0 6 6" fill="none"><path d="M0.9 1.9L3 4L5.1 1.9" stroke="#9a9a9a" stroke-width="0.8"/></svg>
<svg class="a" style="left:920px;top:226.3px;" width="8" height="8" viewBox="0 0 8 8" fill="none"><g stroke="#b3b3b3" stroke-width="0.8"><path d="M0.9 0.8v6.2h6.3"/><path d="M0.9 3.6a3.4 3.4 0 0 1 3.4 3.4" stroke-dasharray="1 0.8"/></g></svg>
<span id="t105" class="t u" style="top:224px;font-size:8.3px;line-height:12px;color:#fff;letter-spacing:0.562px;left:935.5px;">0°</span>
<svg class="a" style="left:989px;top:226px;" width="8" height="8" viewBox="0 0 8 8" fill="none"><path d="M0.9 7.4V4.6a3.7 3.7 0 0 1 3.7-3.7h2.8" stroke="#b3b3b3" stroke-width="0.9"/></svg>
<div class="a" style="left:1005px;top:223.29999999999998px;width:13.5px;height:13.8px;background:#383838;border:0.8px solid #464646;border-radius:2px;"></div>
<span id="t106" class="t u" style="top:224px;font-size:8.3px;line-height:12px;color:#fff;left:1009.3px;">8</span>
<svg class="a" style="left:1057.5px;top:225px;" width="10" height="10" viewBox="0 0 10 10" fill="none"><g stroke="#f4f4f4" stroke-width="0.9"><path d="M0.8 3.3V2a1.2 1.2 0 0 1 1.2-1.2h1.3M6.7 0.8H8a1.2 1.2 0 0 1 1.2 1.2v1.3M9.2 6.7V8a1.2 1.2 0 0 1-1.2 1.2H6.7M3.3 9.2H2A1.2 1.2 0 0 1 0.8 8V6.7"/></g></svg>
<div class="a" style="left:920px;top:249px;width:8.7px;height:8.7px;background:#0c8ce9;border-radius:1.5px;"></div>
<svg class="a" style="left:920px;top:249px;" width="8.7" height="8.7" viewBox="0 0 8.7 8.7" fill="none"><path d="M2.1 4.5L3.8 6.1L6.7 2.8" stroke="#fff" stroke-width="1.1"/></svg>
<span id="t107" class="t u" style="top:247px;font-size:8.3px;line-height:12px;color:#fff;letter-spacing:0.152px;left:935.5px;">Clip content</span>
<div class="a" style="left:907px;top:270.4px;width:173px;height:0.8px;background:#3e3e3e;"></div>
<span id="t108" class="t u" style="top:283px;font-size:8.3px;line-height:12px;color:#fff;font-weight:700;letter-spacing:-0.156px;left:918.3px;">Parent component</span>
<svg class="a" style="left:918px;top:307px;" width="9.4" height="10" viewBox="0 0 9.4 10" fill="none"><g fill="#f0f0f0"><path d="M4.7 0.4L6.2 1.9L4.7 3.4L3.2 1.9Z"/><path d="M4.7 6.4L6.2 7.9L4.7 9.4L3.2 7.9Z"/><path d="M1.7 3.4L3.2 4.9L1.7 6.4L0.2 4.9Z"/><path d="M7.7 3.4L9.2 4.9L7.7 6.4L6.2 4.9Z"/></g></svg>
<span id="t109" class="t u" style="top:306px;font-size:8.3px;line-height:12px;color:#fff;letter-spacing:0.26px;left:937.5px;">Button</span>
<div class="a" style="left:907px;top:329px;width:173px;height:0.8px;background:#3e3e3e;"></div>
<span id="t110" class="t u" style="top:341px;font-size:8.3px;line-height:12px;color:#fff;font-weight:700;letter-spacing:-0.142px;left:918.3px;">Current variant</span>
<svg class="a" style="left:1057.5px;top:341.5px;" width="10" height="11" viewBox="0 0 10 11" fill="none"><g stroke="#f4f4f4" stroke-width="0.85"><path d="M2.5 0.6v5.6M2.5 9v1.6M7.5 0.6v1.2M7.5 4.6v6"/><circle cx="2.5" cy="7.6" r="1.4"/><circle cx="7.5" cy="3.2" r="1.4"/></g></svg>
<span id="t111" class="t u" style="top:364px;font-size:8.3px;line-height:12px;color:#f2f2f2;letter-spacing:-0.167px;left:918.3px;">Type</span>
<span id="t112" class="t u" style="top:364px;font-size:8.3px;line-height:12px;color:#fff;letter-spacing:0.034px;left:979.5px;">Default</span>
<span id="t113" class="t u" style="top:387px;font-size:8.3px;line-height:12px;color:#f2f2f2;letter-spacing:0.028px;left:918.3px;">Appearance</span>
<span id="t114" class="t u" style="top:387px;font-size:8.3px;line-height:12px;color:#fff;letter-spacing:-0.013px;left:979.5px;">Primary</span>
<span id="t115" class="t u" style="top:410px;font-size:8.3px;line-height:12px;color:#f2f2f2;letter-spacing:0.147px;left:918.3px;">Intent</span>
<span id="t116" class="t u" style="top:410px;font-size:8.3px;line-height:12px;color:#fff;letter-spacing:0.052px;left:979.5px;">None</span>
<span id="t117" class="t u" style="top:434px;font-size:8.3px;line-height:12px;color:#f2f2f2;letter-spacing:-0.214px;left:918.3px;">Size</span>
<span id="t118" class="t u" style="top:434px;font-size:8.3px;line-height:12px;color:#fff;letter-spacing:-0.059px;left:979.5px;">Large</span>
<span id="t119" class="t u" style="top:457px;font-size:8.3px;line-height:12px;color:#f2f2f2;letter-spacing:-0.046px;left:918.3px;">hasBeforeI...</span>
<span id="t120" class="t u" style="top:457px;font-size:8.3px;line-height:12px;color:#fff;letter-spacing:-0.109px;left:979.5px;">No</span>
<span id="t121" class="t u" style="top:480px;font-size:8.3px;line-height:12px;color:#f2f2f2;letter-spacing:0.128px;left:918.3px;">hasAfterIcon</span>
<span id="t122" class="t u" style="top:480px;font-size:8.3px;line-height:12px;color:#fff;letter-spacing:-0.109px;left:979.5px;">No</span>
<span id="t123" class="t u" style="top:503px;font-size:8.3px;line-height:12px;color:#f2f2f2;letter-spacing:-0.001px;left:918.3px;">hasDropdo...</span>
<span id="t124" class="t u" style="top:503px;font-size:8.3px;line-height:12px;color:#fff;letter-spacing:-0.109px;left:979.5px;">No</span>
<span id="t125" class="t u" style="top:526px;font-size:8.3px;line-height:12px;color:#f2f2f2;letter-spacing:0.156px;left:918.3px;">State</span>
<span id="t126" class="t u" style="top:526px;font-size:8.3px;line-height:12px;color:#fff;letter-spacing:0.05px;left:979.5px;">Normal</span>
<div class="a" style="left:907px;top:549.3px;width:173px;height:0.8px;background:#3e3e3e;"></div>
<span id="t127" class="t u" style="top:561px;font-size:8.3px;line-height:12px;color:#fff;font-weight:700;letter-spacing:-0.214px;left:918.3px;">Auto layout</span>
<div class="a" style="left:1058.5px;top:566.6px;width:8.6px;height:0.9px;background:#e6e6e6;"></div>
<svg class="a" style="left:920px;top:588.8px;" width="7" height="9" viewBox="0 0 7 9" fill="none"><path d="M3.5 0.8v7.2M1.1 5.7L3.5 8.1L5.9 5.7" stroke="#e6e6e6" stroke-width="0.85"/></svg>
<div class="a" style="left:932px;top:585px;width:17.6px;height:16.6px;background:#444;border-radius:2px;"></div>
<svg class="a" style="left:936.5px;top:589.7px;" width="9" height="7" viewBox="0 0 9 7" fill="none"><path d="M0.8 3.5h7.2M5.7 1.1L8.1 3.5L5.7 5.9" stroke="#fff" stroke-width="0.85"/></svg>
<svg class="a" style="left:954px;top:588.7px;" width="9.5" height="9" viewBox="0 0 9.5 9" fill="none"><path d="M0.9 6h5.4a2.4 2.4 0 0 0 0-4.8H4.6M2.9 4L0.9 6L2.9 8" stroke="#e6e6e6" stroke-width="0.85"/></svg>
<div class="a" style="left:985px;top:581.7px;width:46.2px;height:46.4px;border:0.8px solid #444;border-radius:2px;"></div>
<svg class="a" style="left:991px;top:588px;" width="5" height="5" viewBox="0 0 5 5"><circle cx="2.3" cy="2.6" r="0.65" fill="#8a8a8a"/></svg>
<svg class="a" style="left:991px;top:603px;" width="5" height="5" viewBox="0 0 5 5"><circle cx="2.3" cy="2" r="0.65" fill="#8a8a8a"/></svg>
<svg class="a" style="left:991px;top:617px;" width="5" height="5" viewBox="0 0 5 5"><circle cx="2.3" cy="2.5" r="0.65" fill="#8a8a8a"/></svg>
<svg class="a" style="left:1006px;top:588px;" width="5" height="5" viewBox="0 0 5 5"><circle cx="1.7" cy="2.6" r="0.65" fill="#8a8a8a"/></svg>
<svg class="a" style="left:1006px;top:617px;" width="5" height="5" viewBox="0 0 5 5"><circle cx="1.7" cy="2.5" r="0.65" fill="#8a8a8a"/></svg>
<svg class="a" style="left:1020px;top:588px;" width="5" height="5" viewBox="0 0 5 5"><circle cx="2.3" cy="2.6" r="0.65" fill="#8a8a8a"/></svg>
<svg class="a" style="left:1020px;top:603px;" width="5" height="5" viewBox="0 0 5 5"><circle cx="2.3" cy="2" r="0.65" fill="#8a8a8a"/></svg>
<svg class="a" style="left:1020px;top:617px;" width="5" height="5" viewBox="0 0 5 5"><circle cx="2.3" cy="2.5" r="0.65" fill="#8a8a8a"/></svg>
<div class="a" style="left:1002px;top:601px;width:2.6px;height:8px;background:#7fb0f5;border-radius:0.6px;"></div>
<div class="a" style="left:1006.2px;top:599px;width:2.8px;height:12px;background:#7fb0f5;border-radius:0.6px;"></div>
<div class="a" style="left:1010.8px;top:602px;width:2.6px;height:6px;background:#7fb0f5;border-radius:0.6px;"></div>
<svg class="a" style="left:1056px;top:591px;" width="6" height="6" viewBox="0 0 6 6"><circle cx="2.2" cy="2.2" r="1.1" fill="#fff"/></svg>
<svg class="a" style="left:1060px;top:591px;" width="6" height="6" viewBox="0 0 6 6"><circle cx="2.7" cy="2.2" r="1.1" fill="#fff"/></svg>
<svg class="a" style="left:1065px;top:591px;" width="6" height="6" viewBox="0 0 6 6"><circle cx="2.2" cy="2.2" r="1.1" fill="#fff"/></svg>
<svg class="a" style="left:918.5px;top:611.2px;" width="11" height="10" viewBox="0 0 11 10" fill="none"><g stroke="#b3b3b3" stroke-width="0.85"><path d="M0.8 0.9h2v8.2h-2M10.2 0.9h-2v8.2h2"/><path d="M5.5 3.2v3.6" stroke-width="1.1"/></g></svg>
<div class="a" style="left:935px;top:609.6px;width:13.5px;height:13.8px;background:#383838;border:0.8px solid #464646;border-radius:2px;"></div>
<span id="t128" class="t u" style="top:610px;font-size:8.3px;line-height:12px;color:#fff;left:939.4px;">8</span>
<svg class="a" style="left:918.5px;top:637.5px;" width="11" height="10" viewBox="0 0 11 10" fill="none"><g stroke="#b3b3b3" stroke-width="0.85"><path d="M0.9 0.6v8.8M10.1 0.6v8.8"/><rect x="3.4" y="2.9" width="4.2" height="4.2"/></g></svg>
<div class="a" style="left:936px;top:635.8000000000001px;width:17px;height:13.8px;background:#383838;border:0.8px solid #464646;border-radius:2px;"></div>
<span id="t129" class="t u" style="top:637px;font-size:8.3px;line-height:12px;color:#fff;letter-spacing:-0.734px;left:940.3px;">16</span>
<svg class="a" style="left:988.5px;top:637.5px;" width="10" height="10" viewBox="0 0 10 10" fill="none"><g stroke="#b3b3b3" stroke-width="0.85"><path d="M0.6 0.9h8.8M0.6 9.1h8.8"/><rect x="2.9" y="2.9" width="4.2" height="4.2"/></g></svg>
<span id="t130" class="t u" style="top:637px;font-size:8.3px;line-height:12px;color:#fff;left:1005px;">0</span>
<svg class="a" style="left:1058px;top:637.5px;" width="10" height="10" viewBox="0 0 10 10" fill="none"><g stroke="#b3b3b3" stroke-width="0.85"><path d="M4 0.9h5.1v3M9.1 6.2v2.9H4" /></g></svg>
<div class="a" style="left:1039.4px;top:633.4px;width:23.2px;height:23.2px;background:#1e1e1e;border-radius:50%;"></div>
<span id="t131" class="t u" style="top:637px;font-size:11.5px;line-height:16px;color:#e6e6e6;left:951px;width:200px;text-align:center;">?</span>
<div class="a" style="left:907px;top:659.6px;width:173px;height:0.8px;background:#3e3e3e;"></div>
<div class="a" style="left:9.2px;top:9px;width:9px;height:9px;border:0.9px solid #3a3a3a;border-radius:50%;"></div>
<div class="a" style="left:23.5px;top:9px;width:9px;height:9px;border:0.9px solid #3a3a3a;border-radius:50%;"></div>
<div class="a" style="left:37.9px;top:9px;width:9px;height:9px;border:0.9px solid #3a3a3a;border-radius:50%;"></div>
<svg class="a" style="left:66.2px;top:8px;" width="10" height="11" viewBox="0 0 10 11" fill="none"><path d="M5 0.6L9.4 4.6V10.4H6.5V6.9H3.5V10.4H0.6V4.6Z" fill="#b8b8b8"/></svg>
<div class="a" style="left:96px;top:8.6px;width:10.2px;height:10.2px;background:#6d6d6d;border-radius:1.8px;"></div>
<svg class="a" style="left:96px;top:8.6px;" width="10.2" height="10.2" viewBox="0 0 10.2 10.2" fill="none"><path d="M2.4 2.6c1.8-0.4 3.4 0.2 4.4 1.6c0.8 1.1 1 2.4 0.9 3.4c-1.5 0.2-3-0.2-4-1.4C2.7 5 2.3 3.8 2.4 2.6Z" fill="#d9d9d9"/><path d="M3.6 3.8L7.4 7.4" stroke="#6d6d6d" stroke-width="0.6"/><path d="M4.6 7.9h3.6" stroke="#cfcfcf" stroke-width="0.7"/></svg>
<span id="t132" class="t u" style="top:8px;font-size:8.3px;line-height:12px;color:#fff;font-weight:700;letter-spacing:-0.22px;left:113px;">Tetrisly Design</span>
<svg class="a" style="left:180px;top:10.5px;" width="7" height="7" viewBox="0 0 7 7" fill="none"><path d="M0.8 0.8L6.2 6.2M6.2 0.8L0.8 6.2" stroke="#e6e6e6" stroke-width="0.9"/></svg>
<svg class="a" style="left:206px;top:9.5px;" width="8" height="8" viewBox="0 0 8 8" fill="none"><path d="M4 0.5v7M0.5 4h7" stroke="#d0d0d0" stroke-width="0.9"/></svg>
<svg class="a" style="left:1055px;top:11px;" width="6" height="6" viewBox="0 0 6 6"><circle cx="3.0" cy="2.5" r="1.15" fill="#e6e6e6"/></svg>
<svg class="a" style="left:1060px;top:11px;" width="6" height="6" viewBox="0 0 6 6"><circle cx="2.5" cy="2.5" r="1.15" fill="#e6e6e6"/></svg>
<svg class="a" style="left:1064px;top:11px;" width="6" height="6" viewBox="0 0 6 6"><circle cx="3.0" cy="2.5" r="1.15" fill="#e6e6e6"/></svg>
<svg class="a" style="left:9.5px;top:37.5px;" width="10" height="13" viewBox="0 0 10 13" fill="none"><g stroke="#f2f2f2" stroke-width="0.85"><path d="M4.8 0.7H2.9a2 2 0 0 0 0 4H4.8Z"/><path d="M4.8 0.7H6.7a2 2 0 0 1 0 4H4.8Z"/><path d="M4.8 4.7H2.9a2 2 0 0 0 0 4H4.8Z"/><circle cx="6.7" cy="6.7" r="2"/><path d="M4.8 8.7H2.9a2 2 0 1 0 1.9 2V8.7Z"/></g></svg>
<svg class="a" style="left:23px;top:41.8px;" width="6" height="5" viewBox="0 0 6 5" fill="none"><path d="M0.8 1.2L3 3.4L5.2 1.2" stroke="#c8c8c8" stroke-width="0.9"/></svg>
<svg class="a" style="left:47.5px;top:38.5px;" width="10" height="12" viewBox="0 0 10 12" fill="none"><path d="M1 0.9L9 5.3L5.2 6.4L3.6 10.6Z" stroke="#e9dff5" stroke-width="1.05" stroke-linejoin="round"/></svg>
<svg class="a" style="left:62.5px;top:41.8px;" width="6" height="5" viewBox="0 0 6 5" fill="none"><path d="M0.8 1.2L3 3.4L5.2 1.2" stroke="#d7e9fa" stroke-width="0.9"/></svg>
<svg class="a" style="left:81.5px;top:38px;" width="13" height="13" viewBox="0 0 13 13" fill="none"><path d="M3.6 0.6v11.8M9.4 0.6v11.8M0.6 3.6h11.8M0.6 9.4h11.8" stroke="#f2f2f2" stroke-width="1.05"/></svg>
<svg class="a" style="left:97.5px;top:41.8px;" width="6" height="5" viewBox="0 0 6 5" fill="none"><path d="M0.8 1.2L3 3.4L5.2 1.2" stroke="#c8c8c8" stroke-width="0.9"/></svg>
<svg class="a" style="left:115.5px;top:37.7px;" width="12.6" height="12.6" viewBox="0 0 12.6 12.6" fill="none"><rect x="0.6" y="0.6" width="11.4" height="11.4" stroke="#f2f2f2" stroke-width="1.05"/></svg>
<svg class="a" style="left:132px;top:41.8px;" width="6" height="5" viewBox="0 0 6 5" fill="none"><path d="M0.8 1.2L3 3.4L5.2 1.2" stroke="#c8c8c8" stroke-width="0.9"/></svg>
<svg class="a" style="left:149.5px;top:38px;" width="13" height="13" viewBox="0 0 13 13" fill="none"><g stroke="#f2f2f2" stroke-width="1.05" stroke-linejoin="round"><path d="M0.8 0.8L7.6 2.3C10.2 4 11.6 6.4 11.6 8.6L9.2 11.4L7.2 9.9C4.6 9.6 2.8 8 2.2 5.6Z"/><circle cx="6.5" cy="6.3" r="1.1" fill="#f2f2f2" stroke="none"/><path d="M0.8 0.8L5.8 5.6"/></g></svg>
<svg class="a" style="left:166.5px;top:41.8px;" width="6" height="5" viewBox="0 0 6 5" fill="none"><path d="M0.8 1.2L3 3.4L5.2 1.2" stroke="#c8c8c8" stroke-width="0.9"/></svg>
<svg class="a" style="left:184.5px;top:37.8px;" width="11" height="13" viewBox="0 0 11 13" fill="none"><path d="M0.8 3V0.8H10.2V3M5.5 0.8V11.8M3.6 11.8H7.4" stroke="#f2f2f2" stroke-width="1"/></svg>
<svg class="a" style="left:213.5px;top:37.5px;" width="13" height="13" viewBox="0 0 13 13" fill="none"><g stroke="#f2f2f2" stroke-width="1.05"><rect x="0.8" y="0.8" width="4.4" height="4.4"/><rect x="7.8" y="7.8" width="4.4" height="4.4"/><path d="M3 7.1L5.6 10L3 12.8L0.4 10Z"/><path d="M10 0.5v5M7.5 3h5"/></g></svg>
<svg class="a" style="left:240.5px;top:36.5px;" width="15" height="16" viewBox="0 0 15 16" fill="none"><path d="M4.4 9.4V3.3a1 1 0 0 1 2 0V7.6M6.4 7.6V1.9a1 1 0 0 1 2 0V7.6M8.4 7.6V2.6a1 1 0 0 1 2 0V8M10.4 8V4.6a1 1 0 0 1 2 0v5.6c0 3-1.7 5-4.6 5c-2.2 0-3.3-1-4.4-2.8L1 8.6c-.5-.9.7-1.7 1.4-.9L4.4 10" stroke="#f2f2f2" stroke-width="0.9" stroke-linejoin="round" stroke-linecap="round"/></svg>
<svg class="a" style="left:269.5px;top:37.5px;" width="15" height="14" viewBox="0 0 15 14" fill="none"><path d="M7 1A5.6 5.6 0 1 1 4 11.4L0.9 12.2L1.9 9.4A5.6 5.6 0 0 1 7 1Z" stroke="#f2f2f2" stroke-width="1.05" stroke-linejoin="round"/></svg>
<svg class="a" style="left:278px;top:35px;" width="10" height="10" viewBox="0 0 10 10"><circle cx="5" cy="4.6" r="3.1" fill="#e5401f"/></svg>
<svg class="a" style="left:880.5px;top:37px;" width="15" height="14" viewBox="0 0 15 14" fill="none"><g stroke="#f2f2f2" stroke-width="1.05"><path d="M1.6 9.4V7.2a5.9 5.9 0 0 1 11.8 0V9.4"/><rect x="1.2" y="8.4" width="3" height="5" rx="1.4"/><rect x="10.8" y="8.4" width="3" height="5" rx="1.4"/></g></svg>
<div class="a" style="left:907.3px;top:32.5px;width:39.3px;height:23.6px;background:#0c8ce9;border-radius:4px;"></div>
<span id="t133" class="t u" style="top:38px;font-size:8.3px;line-height:12px;color:#fff;font-weight:700;letter-spacing:-0.266px;left:916px;">Share</span>
<div class="a" style="left:953px;top:32.5px;width:40.5px;height:23.6px;background:#444446;border-radius:12px;"></div>
<div class="a" style="left:955.2px;top:34.6px;width:19.2px;height:19.2px;background:#2a2a2a;border-radius:50%;"></div>
<svg class="a" style="left:958.8px;top:40.5px;" width="12" height="8" viewBox="0 0 12 8" fill="none"><g stroke="#f0f0f0" stroke-width="0.9"><path d="M3.2 1.2L0.8 4L3.2 6.8M8.8 1.2L11.2 4L8.8 6.8M6.9 0.8L5.1 7.2"/></g></svg>
<svg class="a" style="left:1010.5px;top:38.5px;" width="10" height="11" viewBox="0 0 10 11" fill="none"><path d="M0.9 0.9L8.8 5.5L0.9 10.1Z" stroke="#f2f2f2" stroke-width="1.05" stroke-linejoin="round"/></svg>
<svg class="a" style="left:1024.5px;top:41.8px;" width="6" height="5" viewBox="0 0 6 5" fill="none"><path d="M0.8 1.2L3 3.4L5.2 1.2" stroke="#c8c8c8" stroke-width="0.9"/></svg>
<span id="t134" class="t u" style="top:38px;font-size:8.3px;line-height:12px;color:#fff;letter-spacing:-0.245px;left:1042.5px;">100%</span>
<svg class="a" style="left:1067px;top:41.8px;" width="6" height="5" viewBox="0 0 6 5" fill="none"><path d="M0.8 1.2L3 3.4L5.2 1.2" stroke="#c8c8c8" stroke-width="0.9"/></svg>
</div></body></html>
